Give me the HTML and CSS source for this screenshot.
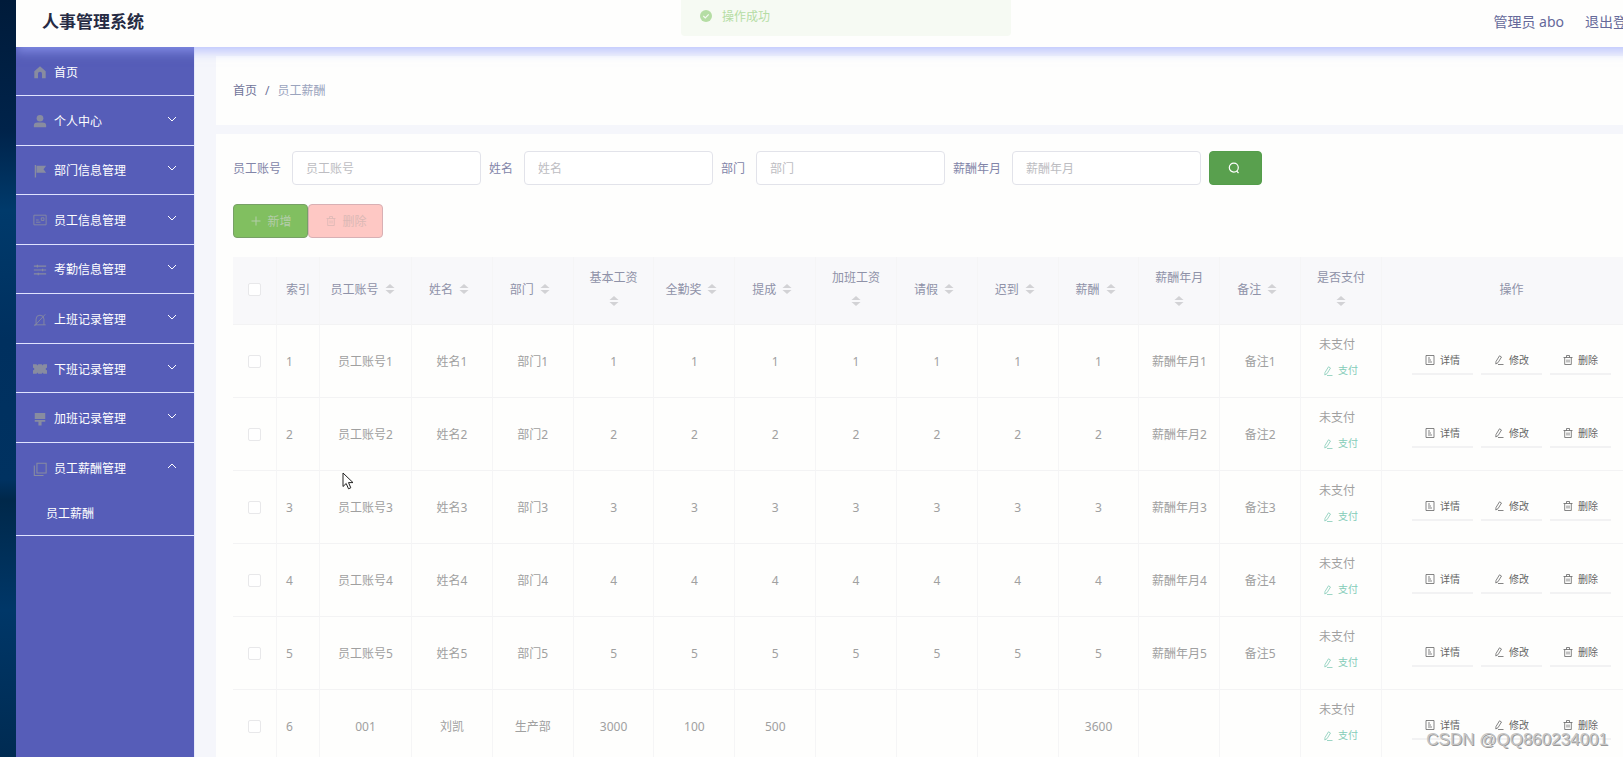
FILE: index.html
```html
<!DOCTYPE html>
<html lang="zh-CN">
<head>
  <meta charset="UTF-8">
  <meta name="viewport" content="width=device-width, initial-scale=1.0">
  <title>人事管理系统</title>
  <link rel="stylesheet" href="styles.css">
</head>
<body>
  <svg class="sprite" aria-hidden="true">
    <symbol id="i-home" viewBox="0 0 16 16"><path fill="currentColor" d="M8 1.5 1.5 7v8h4.2V10a2.3 2.3 0 0 1 4.6 0v5h4.2V7z"/></symbol>
    <symbol id="i-user" viewBox="0 0 16 16"><circle cx="8" cy="4.8" r="3.8" fill="currentColor"/><path fill="currentColor" d="M1 15v-2.5C1 10.5 3 9.6 5 9.6h6c2 0 4 .9 4 2.900V15z"/></symbol>
    <symbol id="i-flag" viewBox="0 0 16 16"><path fill="currentColor" d="M2 1h1.500v14.500H2zM4 2H15l-3 4 3 4H4z"/></symbol>
    <symbol id="i-card" viewBox="0 0 16 16"><path fill="none" stroke="currentColor" d="M1 2.500h14v11H1zM3.500 10.500h5M3.500 8h3M9.500 5.500h3v3h-3z"/></symbol>
    <symbol id="i-sliders" viewBox="0 0 16 16"><path fill="none" stroke="currentColor" stroke-width="1.300" d="M1 3.500h14M1 8h14M1 12.500h14M5 2v3M11 6.500v3M6 11v3"/></symbol>
    <symbol id="i-bell" viewBox="0 0 16 16"><path fill="none" stroke="currentColor" d="M1.500 13.500h13M3.500 13.500V7a4.500 4.500 0 0 1 9 0v6.500M1.500 15 14 1.500"/></symbol>
    <symbol id="i-ticket" viewBox="0 0 16 16"><path fill="currentColor" d="M0 2.500h4l1 1.500 1-1.500h4l1 1.500 1-1.500h4v4a1.500 1.500 0 0 0 0 3v4h-4l-1-1.500-1 1.500H6L5 12l-1 1.500H0v-4a1.500 1.500 0 0 0 0-3z"/></symbol>
    <symbol id="i-brush" viewBox="0 0 16 16"><path fill="currentColor" d="M2 1h12v7H2zM2 9h12v2H9.800v4.500H6.200V11H2z"/></symbol>
    <symbol id="i-copy" viewBox="0 0 16 16"><path fill="none" stroke="currentColor" stroke-width="1.200" d="M4.500 1.500h10.500v11H4.500zM1.500 4v11.500H12"/></symbol>
    <symbol id="i-down" viewBox="0 0 10 10"><path fill="none" stroke="currentColor" d="m1 3 4 4 4-4"/></symbol>
    <symbol id="i-up" viewBox="0 0 10 10"><path fill="none" stroke="currentColor" d="m1 7 4-4 4 4"/></symbol>
    <symbol id="i-search" viewBox="0 0 12 12"><circle cx="5.800" cy="5.600" r="4.500" fill="none" stroke="currentColor" stroke-width="1.200"/><path stroke="currentColor" stroke-width="1.200" d="m8.500 8.800 2 2.200"/></symbol>
    <symbol id="i-plus" viewBox="0 0 10 10"><path stroke="currentColor" d="M5 .5v9M.5 5h9"/></symbol>
    <symbol id="i-trash" viewBox="0 0 10 10"><path fill="none" stroke="currentColor" stroke-width=".8" d="M.5 2.500h9M1.700 2.500v7h6.600v-7M3.500 2.500v-2h3v2M4 4.500v3M6 4.500v3"/></symbol>
    <symbol id="i-doc" viewBox="0 0 10 10"><path fill="none" stroke="currentColor" stroke-width=".8" d="M1 .5h8v9H1zM3 3h2M3 5h3M3 7h4"/></symbol>
    <symbol id="i-edit" viewBox="0 0 10 10"><path fill="none" stroke="currentColor" stroke-width=".8" d="M2 6.500 5.500.8l2 1.200L4 7.700 1.800 9zM4 9.500h5.500"/></symbol>
    <symbol id="i-sort" viewBox="0 0 10 12"><path fill="currentColor" d="M5 1 .5 5h9zM5 11 .5 7h9z"/></symbol>
  </svg>

  <div class="app">
    <header class="header">
      <h1 class="title">人事管理系统</h1>
      <div class="account">
        <span>管理员 abo</span>
        <a href="#">退出登录</a>
      </div>
    </header>

    <div class="message" role="status">
      <svg class="message-icon" viewBox="0 0 12 12"><circle cx="6" cy="6" r="6" fill="currentColor"/><path fill="none" stroke="#f4f9f1" stroke-width="1.200" d="m3.300 6 2 2 3.400-3.600"/></svg>
      <span>操作成功</span>
    </div>

    <div class="body">
      <aside class="sidebar">
        <ul class="menu">
          <li><a href="#"><svg class="icon"><use href="#i-home"/></svg>首页</a></li>
          <li><a href="#"><svg class="icon"><use href="#i-user"/></svg>个人中心<svg class="arrow"><use href="#i-down"/></svg></a></li>
          <li><a href="#"><svg class="icon"><use href="#i-flag"/></svg>部门信息管理<svg class="arrow"><use href="#i-down"/></svg></a></li>
          <li><a href="#"><svg class="icon"><use href="#i-card"/></svg>员工信息管理<svg class="arrow"><use href="#i-down"/></svg></a></li>
          <li><a href="#"><svg class="icon"><use href="#i-sliders"/></svg>考勤信息管理<svg class="arrow"><use href="#i-down"/></svg></a></li>
          <li><a href="#"><svg class="icon"><use href="#i-bell"/></svg>上班记录管理<svg class="arrow"><use href="#i-down"/></svg></a></li>
          <li><a href="#"><svg class="icon"><use href="#i-ticket"/></svg>下班记录管理<svg class="arrow"><use href="#i-down"/></svg></a></li>
          <li><a href="#"><svg class="icon"><use href="#i-brush"/></svg>加班记录管理<svg class="arrow"><use href="#i-down"/></svg></a></li>
        </ul>
        <div class="menu-open">
          <a href="#"><svg class="icon"><use href="#i-copy"/></svg>员工薪酬管理<svg class="arrow"><use href="#i-up"/></svg></a>
          <a href="#" class="sub">员工薪酬</a>
        </div>
      </aside>

      <main class="main">
        <nav class="card breadcrumb">
          <a href="#">首页</a><span>/</span><span class="current">员工薪酬</span>
        </nav>

        <section class="card content">
          <form class="search">
            <label for="account">员工账号</label>
            <input type="text" id="account" placeholder="员工账号">
            <label for="name">姓名</label>
            <input type="text" id="name" placeholder="姓名">
            <label for="dept">部门</label>
            <input type="text" id="dept" placeholder="部门">
            <label for="month">薪酬年月</label>
            <input type="text" id="month" placeholder="薪酬年月">
            <button type="button" class="btn-search" aria-label="查询"><svg><use href="#i-search"/></svg></button>
          </form>

          <div class="toolbar">
            <button type="button" class="btn btn-add"><svg><use href="#i-plus"/></svg>新增</button>
            <button type="button" class="btn btn-del" disabled><svg><use href="#i-trash"/></svg>删除</button>
          </div>

          <table class="table">
            <colgroup>
              <col class="col-check"><col class="col-index"><col class="col-account">
              <col span="12">
              <col class="col-action">
            </colgroup>
            <thead>
              <tr id="head"></tr>
            </thead>
            <tbody id="rows"></tbody>
          </table>
        </section>
      </main>
    </div>
  </div>

  <svg class="cursor" viewBox="0 0 12 18"><path fill="#fff" stroke="#222" d="M1 1v13.500l3.200-3 2.300 5.300 2.300-1-2.300-5.200H11z"/></svg>
  <div class="watermark">CSDN @QQ860234001</div>

  <script src="script.js"></script>
</body>
</html>
```
FILE: styles.css
```css
* {
  box-sizing: border-box;
}
body {
  margin: 0;
  min-height: 100vh;
  overflow: hidden;
  font-family: "Noto Sans", "Noto Sans CJK SC", sans-serif;
  font-size: 12px;
  line-height: 23px;
  color: #a0a0a0;
  background: linear-gradient(#001b3a 0, #00234a 130px, #003a6b 210px, #00305f 340px, #003261 480px, #00284a 500px, #003768 610px, #002b52 100%);
}
a {
  color: inherit;
  text-decoration: none;
}
button,
input {
  font: inherit;
  margin: 0;
}
.sprite {
  display: none;
}
.app {
  position: relative;
  display: flex;
  flex-direction: column;
  height: 100vh;
  min-width: 1660px;
  margin-left: 16px;
  overflow: hidden;
  background: #f5f6fb;
}

/* header */
.header {
  position: relative;
  z-index: 1;
  display: flex;
  flex: none;
  align-items: center;
  justify-content: space-between;
  height: 47px;
  padding: 0 35px 4px 26px;
  background: #fefefd;
  box-shadow: 0 5px 10px rgba(155, 168, 255, 0.6);
}
.title {
  margin: 0;
  font-size: 17px;
  color: #262b44;
}
.account {
  display: flex;
  gap: 21px;
  font-size: 14px;
  color: #65699a;
}
.message {
  position: absolute;
  z-index: 2;
  top: -6px;
  left: 50%;
  display: flex;
  align-items: center;
  gap: 10px;
  width: 330px;
  height: 42px;
  padding: 2px 19px 0;
  border-radius: 4px;
  color: #b5dda4;
  background: #f6faf3;
  transform: translateX(-50%);
}
.message-icon {
  width: 12px;
  height: 12px;
}

/* sidebar */
.body {
  display: flex;
  flex: 1;
  min-height: 0;
}
.sidebar {
  flex: none;
  width: 179px;
  border-right: 1px solid #e6e9fb;
  color: #fff;
  background: #565db8;
}
.menu {
  display: grid;
  grid-template-rows: 49px repeat(7, 1fr);
  height: 396px;
  margin: 0;
  padding: 0;
  list-style: none;
}
.menu li,
.menu-open {
  border-bottom: 1px solid #dfe3ff;
}
.sidebar a {
  display: flex;
  align-items: center;
  height: 100%;
  padding: 2px 17px 0;
}
.menu-open a {
  height: 49px;
}
.menu-open .sub {
  height: 43px;
  padding: 0 30px;
}
.icon {
  width: 14px;
  height: 14px;
  margin-right: 7px;
  color: #888ca0;
}
.arrow {
  width: 10px;
  height: 10px;
  margin: 0 0 5px auto;
}

/* content */
.main {
  flex: 1;
  min-width: 0;
  padding: 9px 17px 0 21px;
}
.card {
  padding: 17px;
  background: #fefefd;
}
.breadcrumb {
  display: flex;
  gap: 8px;
  align-items: center;
  height: 69px;
  margin-bottom: 9px;
  color: #70749a;
}
.breadcrumb .current {
  color: #9ba4bd;
}
.content {
  height: 100%;
}
.search {
  display: flex;
  align-items: center;
  gap: 8px;
  margin-bottom: 19px;
}
.search label {
  margin-right: 3px;
  color: #8285a8;
}
.search input {
  width: 189px;
  height: 34px;
  padding: 0 13px;
  border: 1px solid #e2e3ea;
  border-radius: 4px;
  background: #fff;
}
.search input::placeholder {
  color: #bdbdc2;
}
.btn-search {
  display: flex;
  align-items: center;
  justify-content: center;
  width: 53px;
  height: 34px;
  padding: 0 4px 0 0;
  border: 1px solid #549d4b;
  border-radius: 4px;
  color: #fff;
  background: #59a04e;
}
.btn-search svg {
  width: 12px;
  height: 12px;
}
.toolbar {
  display: flex;
  margin-bottom: 19px;
}
.btn {
  display: flex;
  align-items: center;
  justify-content: center;
  gap: 6px;
  width: 75px;
  height: 34px;
  padding: 0 0 0 2px;
  border: 1px solid #77a066;
  border-radius: 4px;
}
.btn svg {
  width: 10px;
  height: 10px;
}
.btn-add {
  color: #b4cdaa;
  background: #81bf60;
}
.btn-del {
  border-color: #d8b0b4;
  color: #dbb8b5;
  background: #fec8c4;
}

/* table */
.table {
  width: 1409px;
  table-layout: fixed;
  border-collapse: separate;
  border-spacing: 0;
  text-align: center;
}
.col-check {
  width: 44px;
}
.col-index {
  width: 43px;
}
.col-account {
  width: 92px;
}
.col-action {
  width: 260px;
}
.table th,
.table td {
  padding: 0 9px;
  border-right: 1px solid #f5f5f6;
  border-bottom: 1px solid #f3f3f4;
}
.table th {
  height: 68px;
  padding-bottom: 3px;
  font-weight: 400;
  color: #8f92a8;
  background: #f8f8fa;
}
.table td {
  height: 73px;
}
.table .index {
  text-align: left;
}
.table input {
  display: block;
  width: 13px;
  height: 13px;
  margin: 0 auto;
  border: 1px solid #e8e8ea;
  border-radius: 2px;
  background: #fff;
  appearance: none;
}
.sort {
  display: inline-flex;
  align-items: center;
  justify-content: center;
  width: 22px;
  height: 23px;
  vertical-align: top;
  color: #d2d2d5;
}
.sort svg {
  width: 10px;
  height: 12px;
}
.table .pay {
  padding: 8px 9px 0;
  text-align: left;
  vertical-align: top;
}
.pay span {
  display: block;
  padding-left: 9px;
}
.btn-text {
  display: inline-flex;
  align-items: center;
  justify-content: center;
  gap: 5px;
  width: 61px;
  height: 27px;
  padding: 0;
  border: 0;
  font-size: 10px;
  color: #666;
  background: none;
}
.btn-text svg {
  width: 10px;
  height: 10px;
}
.actions {
  display: flex;
  justify-content: center;
  gap: 8px;
}
.actions .btn-text {
  border-bottom: 2px solid #f2f2f3;
}
.pay .btn-text {
  height: 29px;
  color: #84ccb8;
}

.cursor {
  position: absolute;
  top: 472px;
  left: 342px;
  width: 12px;
  height: 18px;
}
.watermark {
  position: absolute;
  right: 15px;
  bottom: 6px;
  font-family: "Liberation Sans", Arial, sans-serif;
  font-size: 17px;
  color: #c4c4c4;
  text-shadow: 1px 1px 0 #999;
}
```
FILE: script.js
```js
const columns = ['员工账号', '姓名', '部门', '基本工资', '全勤奖', '提成', '加班工资', '请假', '迟到', '薪酬', '薪酬年月', '备注', '是否支付'];

const data = [];
for (let i = 1; i <= 5; i++) {
  data.push(['员工账号' + i, '姓名' + i, '部门' + i, i, i, i, i, i, i, i, '薪酬年月' + i, '备注' + i]);
}
data.push(['001', '刘凯', '生产部', 3000, 100, 500, '', '', '', 3600, '', '']);

function textButton(icon, text) {
  return `<button type="button" class="btn-text"><svg><use href="#i-${icon}"/></svg>${text}</button>`;
}

// Table header
document.getElementById('head').innerHTML =
  '<th><input type="checkbox" aria-label="全选"></th><th class="index">索引</th>' +
  columns.map(name => `<th>${name}<wbr><span class="sort"><svg><use href="#i-sort"/></svg></span></th>`).join('') +
  '<th>操作</th>';

// Table rows
document.getElementById('rows').innerHTML = data.map((row, i) => `
  <tr>
    <td><input type="checkbox" aria-label="选择 ${i + 1}"></td>
    <td class="index">${i + 1}</td>
    ${row.map(value => `<td>${value}</td>`).join('')}
    <td class="pay"><span>未支付</span>${textButton('edit', '支付')}</td>
    <td><div class="actions">${textButton('doc', '详情')}${textButton('edit', '修改')}${textButton('trash', '删除')}</div></td>
  </tr>`).join('');
```
